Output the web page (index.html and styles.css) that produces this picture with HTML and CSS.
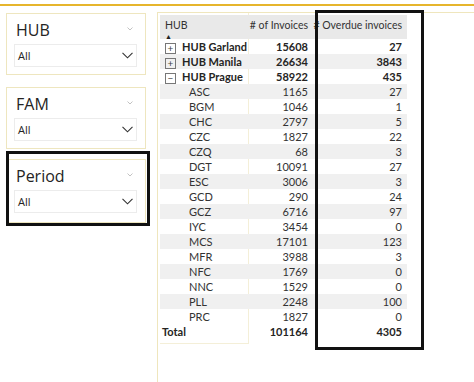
FILE: index.html
```html
<!DOCTYPE html>
<html>
<head>
<meta charset="utf-8">
<link rel="stylesheet" href="styles.css">
</head>
<body>
<div class="top-rule"></div>
<div class="main">
  <div class="slicers">
    <div class="slicer">
      <div class="slicer-head"><span class="slicer-title">HUB</span><svg class="mini-chev" width="6" height="4" viewBox="0 0 6 4"><path d="M0.5 0.5 L3 3 L5.5 0.5" fill="none" stroke="#b3b3b3" stroke-width="0.8"/></svg></div>
      <div class="dropdown"><span>All</span><svg class="chev" width="11" height="7" viewBox="0 0 11 7"><path d="M0.5 0.8 L5.5 5.8 L10.5 0.8" fill="none" stroke="#333" stroke-width="1.1"/></svg></div>
    </div>
    <div class="slicer">
      <div class="slicer-head"><span class="slicer-title">FAM</span><svg class="mini-chev" width="6" height="4" viewBox="0 0 6 4"><path d="M0.5 0.5 L3 3 L5.5 0.5" fill="none" stroke="#b3b3b3" stroke-width="0.8"/></svg></div>
      <div class="dropdown"><span>All</span><svg class="chev" width="11" height="7" viewBox="0 0 11 7"><path d="M0.5 0.8 L5.5 5.8 L10.5 0.8" fill="none" stroke="#333" stroke-width="1.1"/></svg></div>
    </div>
    <div class="slicer slicer-period">
      <div class="slicer-head"><span class="slicer-title">Period</span><svg class="mini-chev" width="6" height="4" viewBox="0 0 6 4"><path d="M0.5 0.5 L3 3 L5.5 0.5" fill="none" stroke="#b3b3b3" stroke-width="0.8"/></svg></div>
      <div class="dropdown"><span>All</span><svg class="chev" width="11" height="7" viewBox="0 0 11 7"><path d="M0.5 0.8 L5.5 5.8 L10.5 0.8" fill="none" stroke="#333" stroke-width="1.1"/></svg></div>
    </div>
  </div>
  <div class="table-panel">
    <div class="col-frame"></div>
    <table class="matrix">
      <thead>
        <tr>
          <th class="c1"><div class="hd">HUB</div><div class="sort">&#9650;</div></th>
          <th class="c2"><div class="hd hd-r"><span># of Invoices</span></div></th>
          <th class="c3"><div class="hd hd-r"><span># Overdue invoices</span></div></th>
        </tr>
      </thead>
      <tbody>
        <tr class="hub"><td class="c1"><span class="box">+</span>HUB Garland</td><td class="c2">15608</td><td class="c3">27</td></tr>
        <tr class="hub alt"><td class="c1"><span class="box">+</span>HUB Manila</td><td class="c2">26634</td><td class="c3">3843</td></tr>
        <tr class="hub"><td class="c1"><span class="box">&minus;</span>HUB Prague</td><td class="c2">58922</td><td class="c3">435</td></tr>
        <tr class="child alt"><td class="c1">ASC</td><td class="c2">1165</td><td class="c3">27</td></tr>
        <tr class="child"><td class="c1">BGM</td><td class="c2">1046</td><td class="c3">1</td></tr>
        <tr class="child alt"><td class="c1">CHC</td><td class="c2">2797</td><td class="c3">5</td></tr>
        <tr class="child"><td class="c1">CZC</td><td class="c2">1827</td><td class="c3">22</td></tr>
        <tr class="child alt"><td class="c1">CZQ</td><td class="c2">68</td><td class="c3">3</td></tr>
        <tr class="child"><td class="c1">DGT</td><td class="c2">10091</td><td class="c3">27</td></tr>
        <tr class="child alt"><td class="c1">ESC</td><td class="c2">3006</td><td class="c3">3</td></tr>
        <tr class="child"><td class="c1">GCD</td><td class="c2">290</td><td class="c3">24</td></tr>
        <tr class="child alt"><td class="c1">GCZ</td><td class="c2">6716</td><td class="c3">97</td></tr>
        <tr class="child"><td class="c1">IYC</td><td class="c2">3454</td><td class="c3">0</td></tr>
        <tr class="child alt"><td class="c1">MCS</td><td class="c2">17101</td><td class="c3">123</td></tr>
        <tr class="child"><td class="c1">MFR</td><td class="c2">3988</td><td class="c3">3</td></tr>
        <tr class="child alt"><td class="c1">NFC</td><td class="c2">1769</td><td class="c3">0</td></tr>
        <tr class="child"><td class="c1">NNC</td><td class="c2">1529</td><td class="c3">0</td></tr>
        <tr class="child alt"><td class="c1">PLL</td><td class="c2">2248</td><td class="c3">100</td></tr>
        <tr class="child"><td class="c1">PRC</td><td class="c2">1827</td><td class="c3">0</td></tr>
        <tr class="total"><td class="c1">Total</td><td class="c2">101164</td><td class="c3">4305</td></tr>
      </tbody>
    </table>
  </div>
</div>
<div class="mark mark-period"></div>
<div class="mark mark-overdue"></div>
</body>
</html>
```

FILE: styles.css
```css
html, body {
  margin: 0;
  padding: 0;
}
body {
  width: 474px;
  height: 382px;
  overflow: hidden;
  background: #ffffff;
  font-family: "Open Sans", "Noto Sans", sans-serif;
  color: #252423;
  position: relative;
}
.top-rule {
  margin-top: 4px;
  height: 2px;
  background: #e6b52c;
}
.main {
  display: flex;
  margin-top: 6px;
}
.slicers {
  width: 157px;
  flex: none;
  padding-left: 6px;
  padding-top: 1px;
  box-sizing: border-box;
  display: flex;
  flex-direction: column;
}
.slicer {
  width: 140px;
  height: 62px;
  box-sizing: border-box;
  border: 1px solid #eee6bf;
  padding: 0 8px 0 7px;
  margin-bottom: 12px;
}
.slicer-period {
  margin-top: -2px;
  height: 64px;
}
.slicer-head {
  display: flex;
  align-items: center;
  justify-content: space-between;
  height: 30px;
  padding-right: 4px;
}
.slicer-title {
  font-size: 16px;
  line-height: 20px;
  padding-left: 2px;
  padding-top: 2px;
  color: #252423;
}
.mini-chev {
  display: block;
}
.dropdown {
  height: 21px;
  border: 1px solid #ececec;
  display: flex;
  align-items: center;
  justify-content: space-between;
  padding: 0 3px 0 3px;
  font-size: 11px;
  color: #252423;
}
.chev {
  display: block;
}
.table-panel {
  flex: 1;
  height: 370px;
  border-left: 1px solid #efe6bd;
  border-top: 1px solid #efe6bd;
  position: relative;
}
.col-frame {
  position: absolute;
  left: 2px;
  top: 0px;
  width: 88px;
  height: 330px;
  border-right: 1px solid #f4efd8;
  border-bottom: 1px solid #f4efd8;
}
.matrix {
  border-collapse: collapse;
  table-layout: fixed;
  width: 247px;
  margin-left: 2px;
  margin-top: 2px;
  font-family: "Lato", "Open Sans", sans-serif;
  font-size: 11px;
  color: #333;
  position: relative;
}
.matrix th {
  background: #e9e9e9;
  font-weight: normal;
  height: 24px;
  padding: 0 5px;
  color: #333;
  vertical-align: top;
  white-space: nowrap;
  overflow: hidden;
}
.hd {
  line-height: 13px;
  padding-top: 4px;
  font-size: 10.5px;
}
.hd-r {
  display: flex;
  justify-content: flex-end;
}
.matrix td {
  height: 15px;
  line-height: 15px;
  padding: 0 5px;
  white-space: nowrap;
  overflow: hidden;
}
.c1 { width: 78px; text-align: left; }
.c2 { width: 55px; text-align: right; }
.c3 { width: 84px; text-align: right; }
.sort {
  font-size: 7px;
  line-height: 6px;
  margin-top: 1px;
  color: #222;
}
.alt td { background: #f0f0f0; }
.hub td { font-weight: bold; color: #252423; }
.box {
  display: inline-block;
  width: 9px;
  height: 9px;
  border: 1px solid #777;
  line-height: 9px;
  font-size: 10px;
  text-align: center;
  font-weight: normal;
  color: #444;
  margin-right: 6px;
  vertical-align: -1px;
}
.child .c1 { padding-left: 29px; }
.total td { font-weight: bold; color: #252423; }
.total .c1 { padding-left: 2px; }
.mark {
  position: absolute;
  border: 3px solid #111;
  box-sizing: border-box;
}
.mark-period {
  left: 6px;
  top: 151px;
  width: 144px;
  height: 75px;
}
.mark-overdue {
  left: 315px;
  top: 10px;
  width: 109px;
  height: 340px;
}
```
